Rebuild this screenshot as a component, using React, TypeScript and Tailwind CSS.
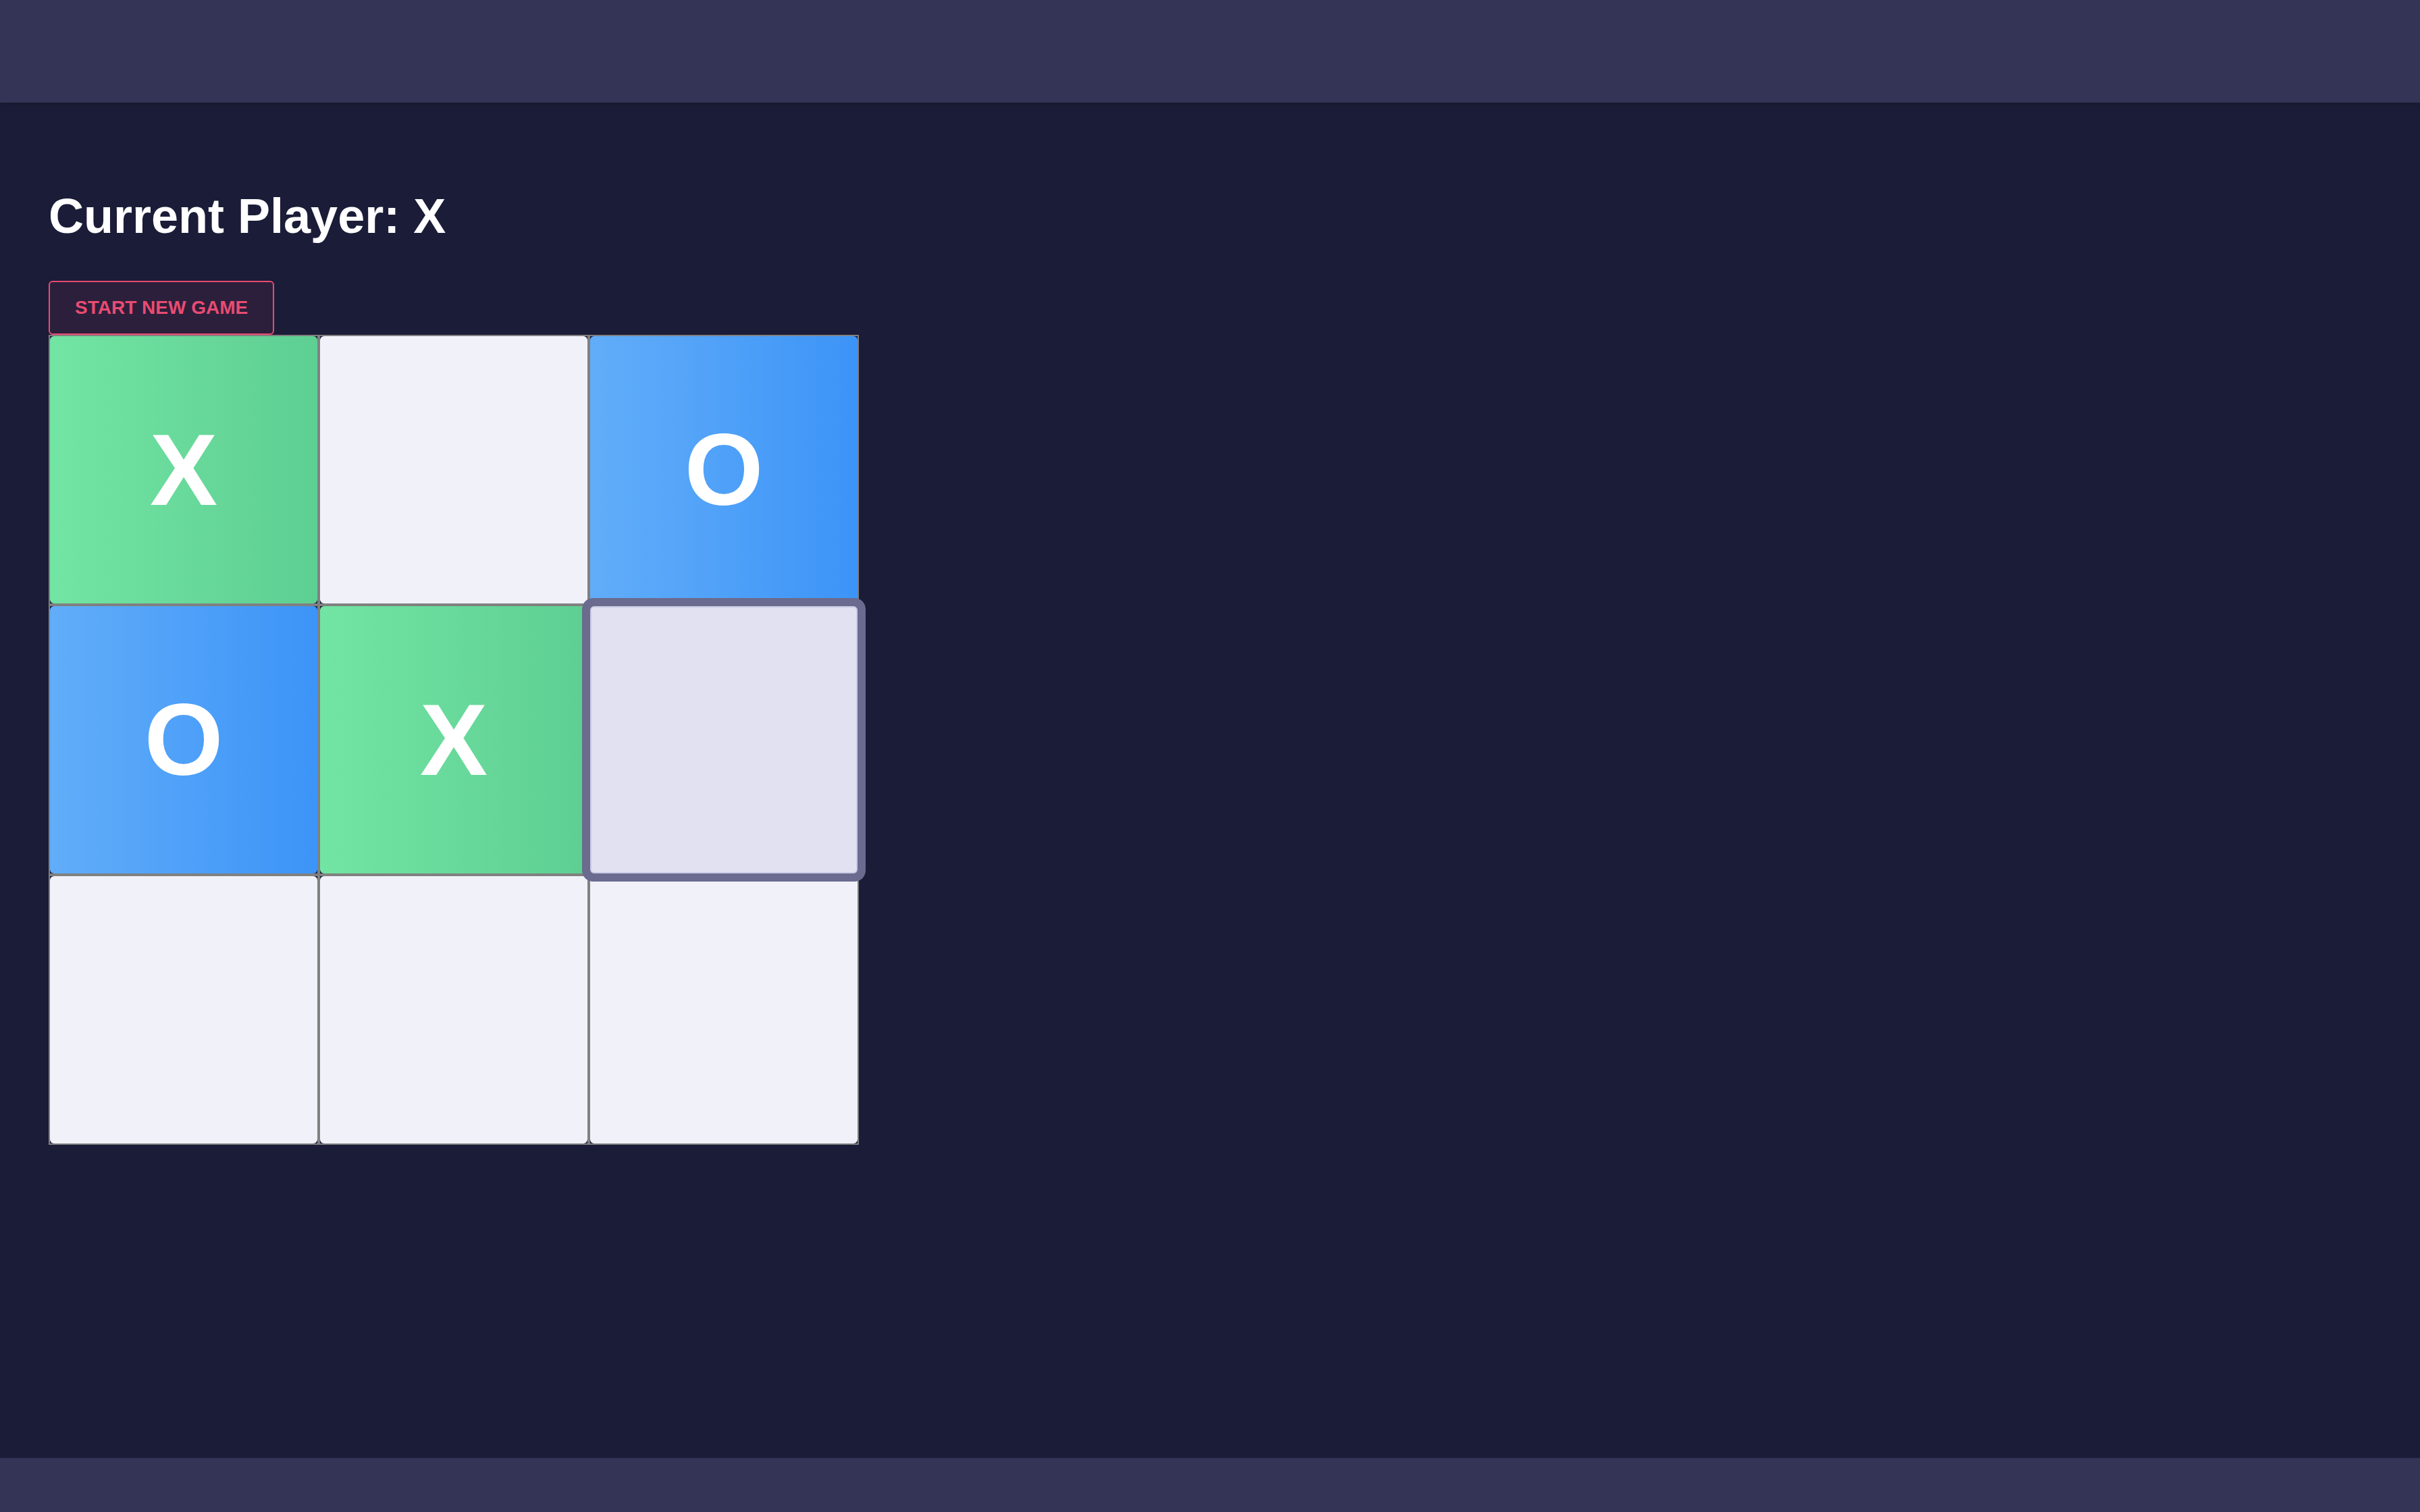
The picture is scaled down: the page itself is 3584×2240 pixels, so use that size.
import React from "react";

type Cell = "X" | "O" | null;

const board: Cell[] = ["X", null, "O", "O", "X", null, null, null, null];
const focusedIndex = 5;

function Square({ value, focused }: { value: Cell; focused: boolean }) {
  let cls =
    "w-full h-full rounded-[6px] flex items-center justify-center text-white font-bold text-[150px] leading-none";
  if (value === "X") {
    cls += " bg-linear-to-r from-[#72e4a3] to-[#5ecf92]";
  } else if (value === "O") {
    cls += " bg-linear-to-r from-[#61adf9] to-[#3c94f7]";
  } else if (focused) {
    cls +=
      " relative z-10 bg-[#e1e1f2] border-2 border-[#cbcbe5] ring-[12px] ring-[#6a6b8f]";
  } else {
    cls += " bg-[#f0f1f9]";
  }
  return (
    <div className="border-2 border-[#808080] h-[400px] w-[400px]">
      <button className={cls} style={{ fontFamily: '"Liberation Sans", Arial, sans-serif' }}>
        {value}
      </button>
    </div>
  );
}

export default function App() {
  return (
    <div
      className="h-screen w-full flex flex-col bg-[#1b1c38] overflow-hidden"
      style={{ fontFamily: '"Liberation Sans", Arial, Helvetica, sans-serif' }}
    >
      <header className="h-[152px] shrink-0 bg-[#343456] shadow-[0_4px_10px_rgba(0,0,0,0.15)] relative z-20" />
      <main className="flex-1 flex flex-col items-start pl-[72px] pt-[128px]">
        <h1 className="text-white font-bold text-[72px] leading-[80px] m-0">
          Current Player: X
        </h1>
        <button className="mt-[56px] h-[80px] px-[37px] border-2 border-[#e94b72] rounded-[6px] bg-[#2c1f3b] text-[#e94b72] font-bold text-[28px] leading-[40px] uppercase">
          Start New Game
        </button>
        <div className="grid grid-cols-3 w-[1200px]">
          {board.map((v, i) => (
            <Square key={i} value={v} focused={i === focusedIndex} />
          ))}
        </div>
      </main>
      <footer className="h-[80px] shrink-0 bg-[#343456]" />
    </div>
  );
}
